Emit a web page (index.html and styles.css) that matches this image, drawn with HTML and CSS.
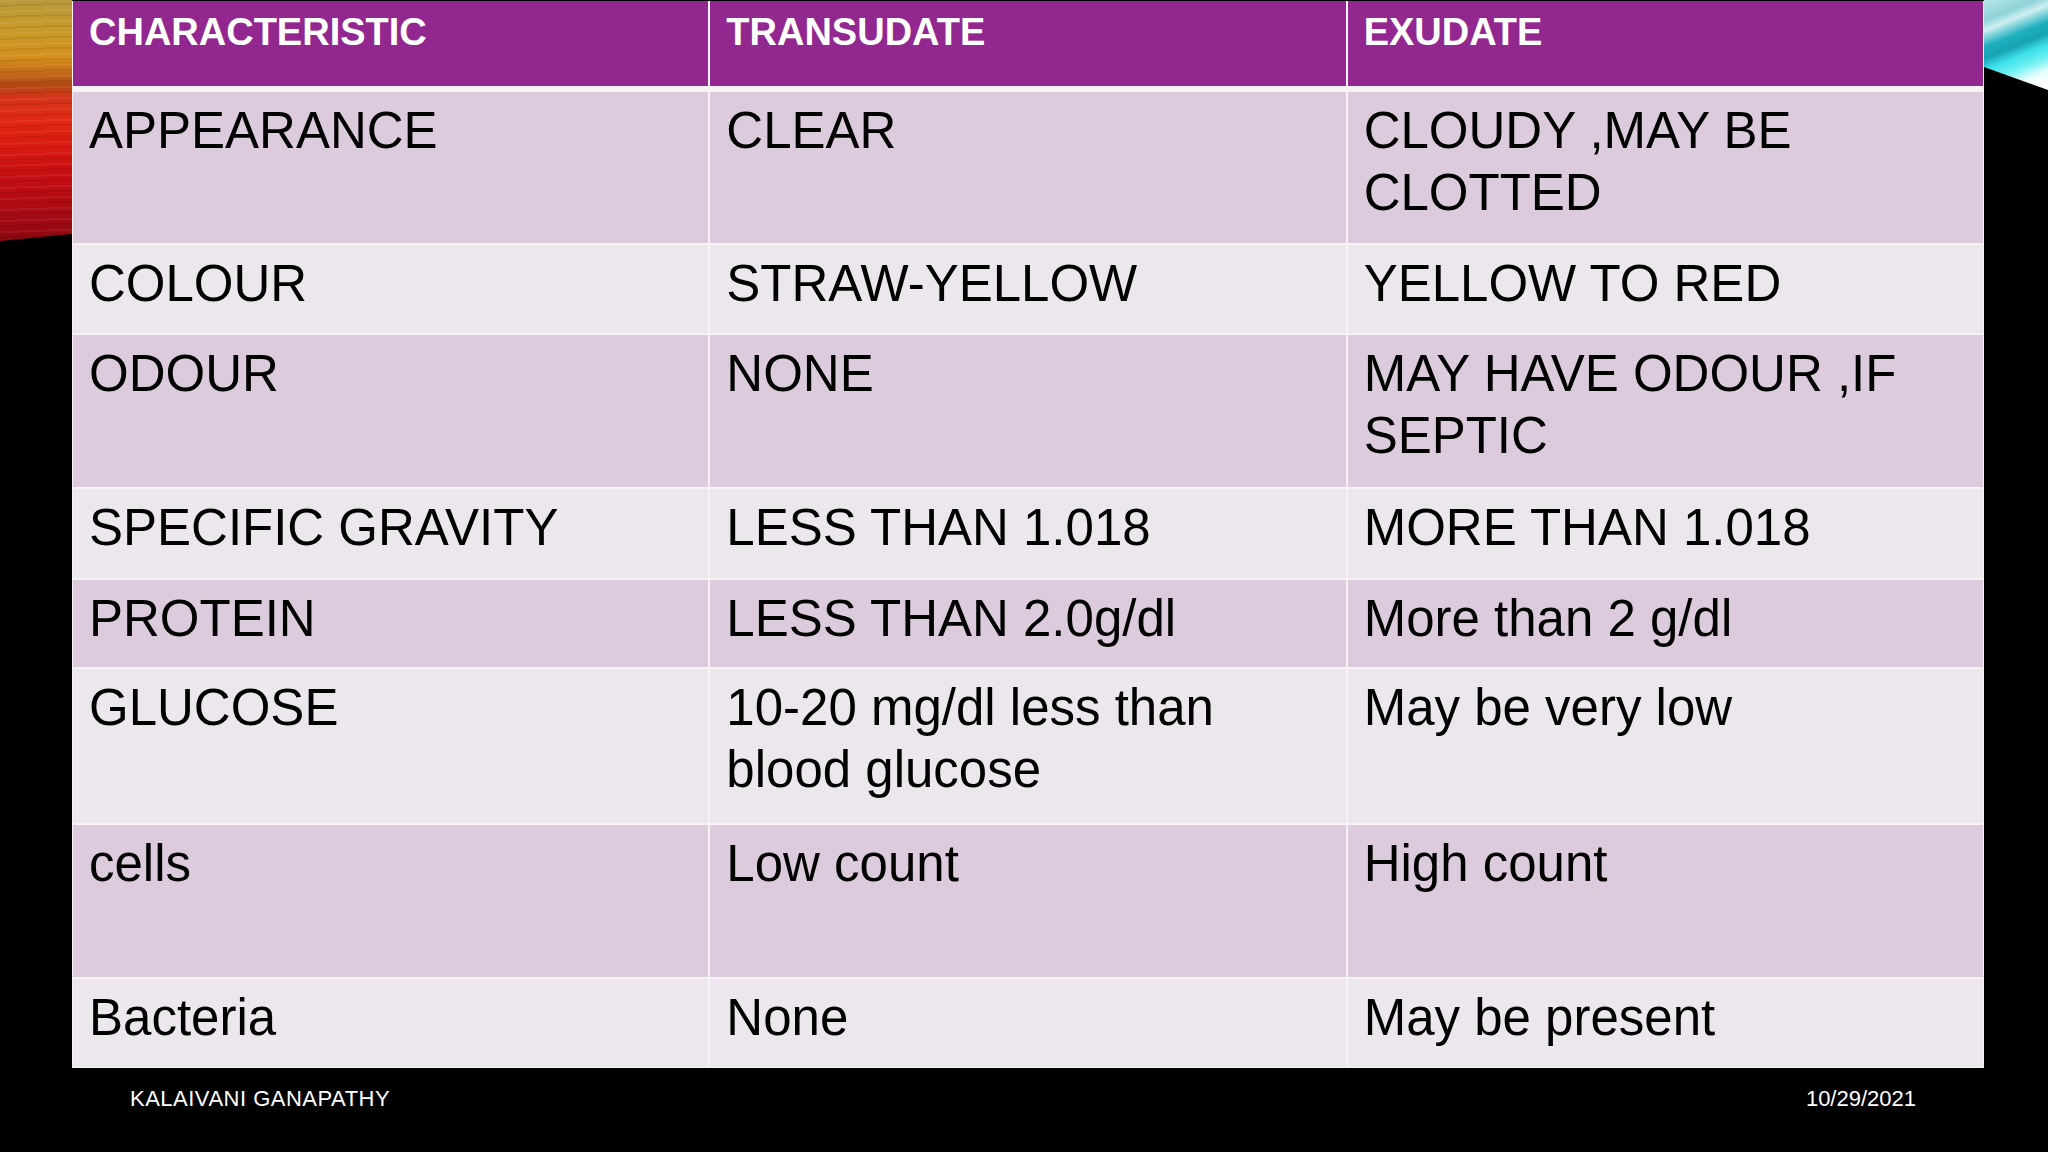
FILE: index.html
```html
<!DOCTYPE html>
<html lang="en">
<head>
<meta charset="utf-8">
<title>Transudate vs Exudate</title>
<link rel="stylesheet" href="styles.css">
</head>
<body>
<div class="slide">
  <div class="side side-left"><div class="swoosh-left"></div></div>
  <div class="main">
    <div class="table">
      <div class="row head">
        <div class="cell">CHARACTERISTIC</div>
        <div class="cell">TRANSUDATE</div>
        <div class="cell">EXUDATE</div>
      </div>
      <div class="row dark">
        <div class="cell">APPEARANCE</div>
        <div class="cell">CLEAR</div>
        <div class="cell">CLOUDY ,MAY BE CLOTTED</div>
      </div>
      <div class="row light">
        <div class="cell">COLOUR</div>
        <div class="cell">STRAW-YELLOW</div>
        <div class="cell">YELLOW TO RED</div>
      </div>
      <div class="row dark">
        <div class="cell">ODOUR</div>
        <div class="cell">NONE</div>
        <div class="cell">MAY HAVE ODOUR ,IF SEPTIC</div>
      </div>
      <div class="row light">
        <div class="cell">SPECIFIC GRAVITY</div>
        <div class="cell">LESS THAN 1.018</div>
        <div class="cell">MORE THAN 1.018</div>
      </div>
      <div class="row dark">
        <div class="cell">PROTEIN</div>
        <div class="cell">LESS THAN 2.0g/dl</div>
        <div class="cell">More than 2 g/dl</div>
      </div>
      <div class="row light">
        <div class="cell">GLUCOSE</div>
        <div class="cell">10-20 mg/dl less than blood glucose</div>
        <div class="cell">May be very low</div>
      </div>
      <div class="row dark">
        <div class="cell">cells</div>
        <div class="cell">Low count</div>
        <div class="cell">High count</div>
      </div>
      <div class="row light">
        <div class="cell">Bacteria</div>
        <div class="cell">None</div>
        <div class="cell">May be present</div>
      </div>
    </div>
    <div class="footer">
      <span class="author">KALAIVANI GANAPATHY</span>
      <span class="date">10/29/2021</span>
    </div>
  </div>
  <div class="side side-right"><div class="swoosh-right"></div></div>
</div>
</body>
</html>
```

FILE: styles.css
```css
* { box-sizing: border-box; }

html, body {
  margin: 0;
  padding: 0;
  background: #000;
}

body {
  font-family: "Liberation Sans", Arial, sans-serif;
}

.slide {
  display: flex;
  width: 2048px;
  height: 1152px;
  background: #000;
  overflow: hidden;
}

.side-left {
  width: 72px;
  flex: none;
}

.swoosh-left {
  height: 241px;
  background:
    repeating-linear-gradient(178deg, rgba(255,255,255,0.06) 0 2px, rgba(0,0,0,0) 2px 5px, rgba(0,0,0,0.07) 5px 7px, rgba(0,0,0,0) 7px 11px),
    linear-gradient(180deg,
      #b89a3c 0%,
      #c99a2a 12%,
      #d58f1c 24%,
      #c2661a 31%,
      #b14a12 35%,
      #d4361a 40%,
      #e22812 50%,
      #d81810 62%,
      #c20d12 75%,
      #a80a12 88%,
      #8c0810 100%);
  clip-path: polygon(0 0, 100% 0, 100% 234px, 0 241px);
}

.main {
  width: 1912px;
  flex: none;
  padding-top: 1px;
}

.side-right {
  width: 64px;
  flex: none;
}

.swoosh-right {
  height: 92px;
  background:
    linear-gradient(158deg,
      #b6e6e8 0%,
      #8fd3d8 18%,
      #cfeff0 26%,
      #1fb0bd 40%,
      #17a3b2 50%,
      #3fe2ea 60%,
      #6ff0f2 70%,
      #e8ffff 82%,
      #ffffff 90%);
  clip-path: polygon(0 0, 100% 0, 100% 90px, 0 67px);
}

.table {
  display: grid;
  grid-template-columns: repeat(3, 1fr);
  grid-template-rows: 89px 151px 88px 152px 89px 87px 154px 152px 88px;
  gap: 2px;
  padding: 0 1px 1px 1px;
  background: #f6f2f6;
}

.row {
  display: contents;
}

.cell {
  padding: 8px 12px 0 16px;
  font-size: 51px;
  line-height: 61.5px;
  color: #000;
}

.row.head .cell {
  background: #92278f;
  color: #fff;
  font-weight: bold;
  font-size: 38px;
  line-height: 45px;
  padding-top: 9px;
  border-bottom: 4px solid #f6f2f6;
}

.row.dark .cell {
  background: #dccbdc;
}

.row.light .cell {
  background: #ece7ed;
}

.footer {
  display: flex;
  justify-content: space-between;
  margin-top: 18px;
  padding: 0 68px 0 58px;
  color: #fff;
  font-size: 22px;
  line-height: 26px;
}

.author {
  letter-spacing: 0.5px;
}
```
